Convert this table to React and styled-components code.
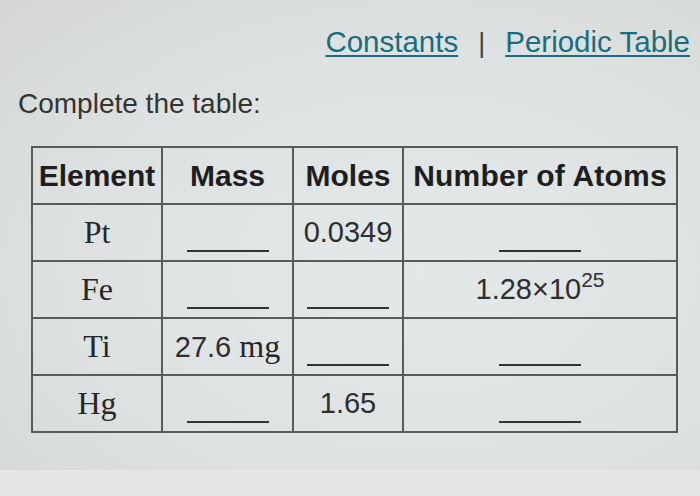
import React from "react";
import styled, { createGlobalStyle } from "styled-components";

const Global = createGlobalStyle`
  html, body { margin: 0; padding: 0; }
  body {
    width: 700px;
    height: 496px;
    overflow: hidden;
    background: #dfe3e3;
    font-family: "Liberation Sans", Arial, sans-serif;
    color: #2b2b2b;
  }
`;

const Page = styled.div`
  width: 700px;
  height: 496px;
  display: flex;
  flex-direction: column;
  background: radial-gradient(ellipse at 60% 55%, #e3e8e9 0%, #dde1e1 60%, #d3d6d4 100%);
`;

const Links = styled.div`
  display: flex;
  justify-content: flex-end;
  align-items: baseline;
  gap: 20px;
  padding: 25px 10px 0 0;
  font-size: 29.5px;
  line-height: 34px;
`;

const Link = styled.a`
  color: #1c6c80;
  text-decoration: underline;
  text-decoration-thickness: 2px;
  text-underline-offset: 3px;
`;

const Sep = styled.span`
  color: #444;
  font-size: 27px;
`;

const Prompt = styled.div`
  margin: 28px 0 0 18px;
  font-size: 28px;
  line-height: 32px;
  color: #333;
`;

const Table = styled.table`
  margin: 26px 0 0 31px;
  width: 647px;
  border-collapse: collapse;
  table-layout: fixed;
  border: 2px solid #4a4a4a;
`;

const Th = styled.th`
  width: ${(p) => p.$w}px;
  height: 55px;
  padding: 0;
  border: 2px solid #5a5a5a;
  font-size: 30px;
  font-weight: bold;
  letter-spacing: ${(p) => p.$ls || 0}px;
  color: #1e1e1e;
  text-align: center;
  vertical-align: middle;
  white-space: nowrap;
`;

const Td = styled.td`
  height: 55px;
  padding: 0;
  border: 2px solid #5a5a5a;
  text-align: center;
  vertical-align: middle;
  font-size: 29px;
  color: #2e2e2e;
  white-space: nowrap;
`;

const Sym = styled.span`
  font-family: "Liberation Serif", "Times New Roman", serif;
  font-size: 32px;
  color: #262626;
`;

const Blank = styled.span`
  display: inline-block;
  width: 82px;
  height: 2px;
  background: #333;
  vertical-align: -13px;
`;

const Sup = styled.sup`
  font-size: 21px;
  vertical-align: 12px;
  line-height: 0;
`;

const Footer = styled.div`
  margin-top: auto;
  height: 26px;
  background: #e7e5e5;
`;

const rows = [
  { el: "Pt", mass: null, moles: "0.0349", atoms: null },
  { el: "Fe", mass: null, moles: null, atoms: "sci" },
  { el: "Ti", mass: "ti", moles: null, atoms: null },
  { el: "Hg", mass: null, moles: "1.65", atoms: null },
];

function Cell({ children }) {
  return <Td>{children == null ? <Blank /> : children}</Td>;
}

export default function App() {
  return (
    <>
      <Global />
      <Page>
        <Links>
          <Link>Constants</Link>
          <Sep>|</Sep>
          <Link>Periodic Table</Link>
        </Links>
        <Prompt>Complete the table:</Prompt>
        <Table>
          <thead>
            <tr>
              <Th $w={128}>Element</Th>
              <Th $w={129}>Mass</Th>
              <Th $w={108}>Moles</Th>
              <Th $w={272} $ls={0.2}>Number of Atoms</Th>
            </tr>
          </thead>
          <tbody>
            {rows.map((r) => (
              <tr key={r.el}>
                <Td>
                  <Sym>{r.el}</Sym>
                </Td>
                <Cell>
                  {r.mass === "ti" ? (
                    <>
                      27.6 <Sym>mg</Sym>
                    </>
                  ) : null}
                </Cell>
                <Cell>{r.moles}</Cell>
                <Cell>
                  {r.atoms === "sci" ? (
                    <>
                      1.28×10<Sup>25</Sup>
                    </>
                  ) : null}
                </Cell>
              </tr>
            ))}
          </tbody>
        </Table>
        <Footer />
      </Page>
    </>
  );
}
